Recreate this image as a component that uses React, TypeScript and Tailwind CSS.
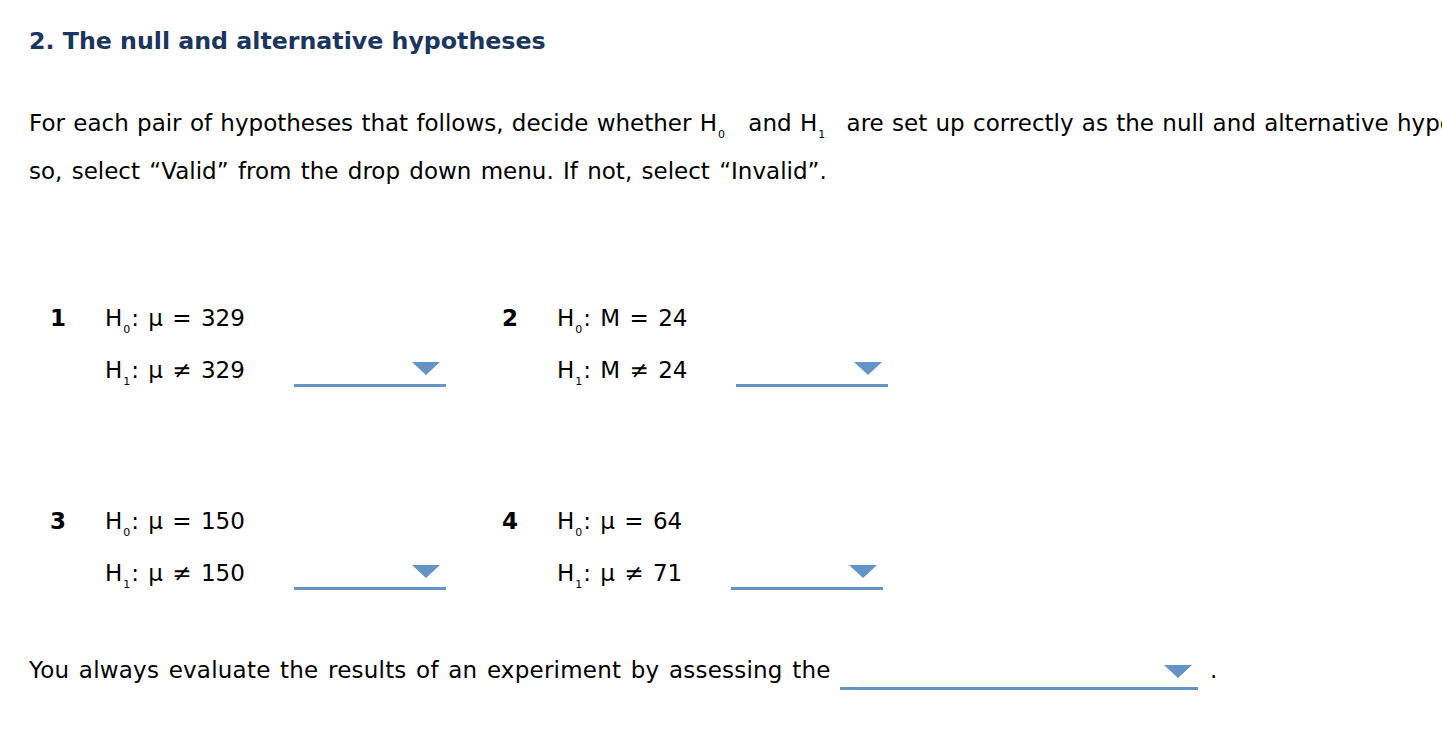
import React from 'react';

const Sub = ({ n, gap = '' }: { n: string; gap?: string }) => (
  <span className={`relative inline-block w-[9px] ${gap}`}>
    <span className="absolute left-[1px] top-[-2px] text-[11px] leading-none">{n}</span>
  </span>
);

const Caret = () => (
  <svg width="28" height="13" viewBox="0 0 28 13" className="block">
    <polygon points="0,0 28,0 14,13" fill="#6493c5" />
  </svg>
);

// select-style blank: underline with a caret on the right
const Dropdown = ({ width, drop = 'align-[-9px]' }: { width: string; drop?: string }) => (
  <span className={`inline-block h-[28px] overflow-hidden border-b-[3px] border-[#6493c5] ${drop} ${width}`}>
    <span className="flex justify-end pr-[6px] pt-[3px]">
      <Caret />
    </span>
  </span>
);

type Pair = { id: string; sym: string; h0: string; h1: string };

const pairs: Pair[] = [
  { id: '1', sym: 'μ', h0: '329', h1: '329' },
  { id: '2', sym: 'M', h0: '24', h1: '24' },
  { id: '3', sym: 'μ', h0: '150', h1: '150' },
  { id: '4', sym: 'μ', h0: '64', h1: '71' },
];

const Item = ({ p }: { p: Pair }) => (
  <div className="flex">
    <div className="w-[55px] font-bold leading-[30px]">{p.id}</div>
    <div className="flex flex-col gap-[22px] [word-spacing:2px]">
      <div className="leading-[30px]">
        H<Sub n="0" />: {p.sym} = {p.h0}
      </div>
      <div className="whitespace-nowrap leading-[30px]">
        H<Sub n="1" />: {p.sym} ≠ {p.h1}
        <span className="ml-[49px]">
          <Dropdown width="w-[152px]" />
        </span>
      </div>
    </div>
  </div>
);

export default function App() {
  return (
    <div className="h-[740px] w-[1442px] overflow-hidden bg-white font-['DejaVu_Sans',sans-serif] text-[23px] text-black">
      <div className="pl-[29px] pt-[26px]">
        <h2 className="text-[23.7px] font-bold leading-[30px] text-[#1b365d]">
          2. The null and alternative hypotheses
        </h2>

        <p className="mt-[43px] whitespace-nowrap leading-[48px] [word-spacing:1px]">
          For each pair of hypotheses that follows, decide whether H<Sub n="0" gap="mr-[14px]" /> and H
          <Sub n="1" gap="mr-[12px]" /> are set up correctly as the null and alternative hypotheses. If
          <br />
          <span className="[word-spacing:2px]">so, select “Valid” from the drop down menu. If not, select “Invalid”.</span>
        </p>

        <div className="mt-[108px] grid w-[925px] grid-cols-2 gap-y-[119px] pl-[21px]">
          {pairs.map((p) => (
            <Item key={p.id} p={p} />
          ))}
        </div>

        <p className="mt-[65px] whitespace-nowrap leading-[30px] tracking-[0.22px] [word-spacing:2px]">
          You always evaluate the results of an experiment by assessing the{' '}
          <Dropdown width="w-[358px]" drop="align-[-12px]" />
          <span className="ml-[12px]">.</span>
        </p>
      </div>
    </div>
  );
}
